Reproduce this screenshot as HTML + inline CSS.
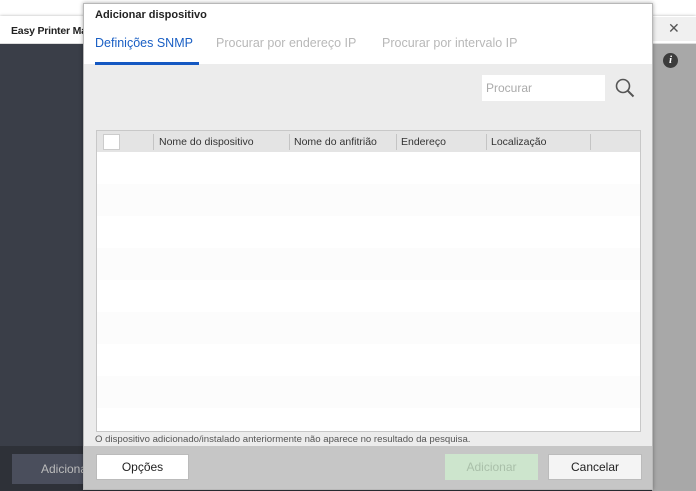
<!DOCTYPE html>
<html><head><meta charset="utf-8"><style>
*{margin:0;padding:0;box-sizing:border-box}
body{width:696px;height:491px;overflow:hidden;background:#fff;font-family:"Liberation Sans","DejaVu Sans",sans-serif;position:relative}
.abs{position:absolute}
</style></head><body>
<div class="abs" style="left:0;top:16px;width:696px;height:475px;background:#3a3e48;box-shadow:0 0 3px rgba(0,0,0,.3)"></div>
<div class="abs" style="left:0;top:16px;width:696px;height:28px;background:#fff;border-bottom:1px solid #ddd"></div>
<div class="abs" style="left:652px;top:17px;width:44px;height:24px;background:#f0f0f0"></div>
<div class="abs" style="left:11px;top:25px;font-size:10.5px;font-weight:bold;color:#222;letter-spacing:-0.2px">Easy Printer Manager</div>
<div class="abs" style="left:668px;top:20px;font-size:14px;font-weight:bold;color:#555">✕</div>
<div class="abs" style="left:652px;top:44px;width:44px;height:447px;background:#a8a8a8"></div>
<div class="abs" style="left:663px;top:53px;width:15px;height:15px;border-radius:50%;background:#3c3c3c;color:#fff;font-size:11px;font-style:italic;font-weight:bold;text-align:center;line-height:15px;font-family:'Liberation Serif',serif">i</div>
<div class="abs" style="left:0;top:446px;width:652px;height:45px;background:#2e3138"></div>
<div class="abs" style="left:12px;top:454px;width:80px;height:30px;background:#4a4e5c;color:#bbb;font-size:12px;line-height:30px;padding-left:29px">Adicionar</div>
<div class="abs" style="left:83px;top:3px;width:570px;height:487px;background:#ececec;border:1px solid #b8b8b8;box-shadow:0 0 4px rgba(0,0,0,.35)">
  <div class="abs" style="left:0;top:0;width:568px;height:60px;background:#fff"></div>
  <div class="abs" style="left:11px;top:5px;font-size:11px;font-weight:bold;color:#222">Adicionar dispositivo</div>
  <div class="abs" style="left:11px;top:32px;font-size:12.5px;color:#1a5fc4">Definições SNMP</div>
  <div class="abs" style="left:11px;top:58px;width:104px;height:3px;background:#1458c2"></div>
  <div class="abs" style="left:132px;top:32px;font-size:12.5px;color:#b8b8b8">Procurar por endereço IP</div>
  <div class="abs" style="left:298px;top:32px;font-size:12.5px;color:#b8b8b8">Procurar por intervalo IP</div>
  <div class="abs" style="left:398px;top:71px;width:123px;height:26px;background:#fff;font-size:12px;color:#aaa;line-height:26px;padding-left:4px">Procurar</div>
  <svg class="abs" style="left:530px;top:73px" width="22" height="22" viewBox="0 0 22 22"><circle cx="9" cy="9" r="6.5" fill="none" stroke="#555" stroke-width="1.6"/><line x1="13.8" y1="13.8" x2="19.5" y2="19.5" stroke="#555" stroke-width="2"/></svg>
  <div class="abs" style="left:12px;top:126px;width:545px;height:302px;background:#fff;border:1px solid #c8c8c8;overflow:hidden">
    <div class="abs" style="left:0;top:0;width:545px;height:21px;background:#e4e4e4;font-size:10.5px;color:#333;line-height:21px">
      <div class="abs" style="left:6px;top:3px;width:17px;height:16px;background:#fff;border:1px solid #ccc"></div>
      <div class="abs" style="left:56px;top:3px;width:1px;height:16px;background:#c4c4c4"></div>
      <div class="abs" style="left:62px;top:1px">Nome do dispositivo</div>
      <div class="abs" style="left:192px;top:3px;width:1px;height:16px;background:#c4c4c4"></div>
      <div class="abs" style="left:197px;top:1px">Nome do anfitrião</div>
      <div class="abs" style="left:299px;top:3px;width:1px;height:16px;background:#c4c4c4"></div>
      <div class="abs" style="left:304px;top:1px">Endereço</div>
      <div class="abs" style="left:389px;top:3px;width:1px;height:16px;background:#c4c4c4"></div>
      <div class="abs" style="left:394px;top:1px">Localização</div>
      <div class="abs" style="left:493px;top:3px;width:1px;height:16px;background:#c4c4c4"></div>
    </div>
    <div class="abs" style="left:0;top:53px;width:545px;height:32px;background:#fcfcfc"></div>
    <div class="abs" style="left:0;top:117px;width:545px;height:32px;background:#fcfcfc"></div>
    <div class="abs" style="left:0;top:181px;width:545px;height:32px;background:#fcfcfc"></div>
    <div class="abs" style="left:0;top:245px;width:545px;height:32px;background:#fcfcfc"></div>
  </div>
  <div class="abs" style="left:11px;top:430px;font-size:9.6px;color:#555">O dispositivo adicionado/instalado anteriormente não aparece no resultado da pesquisa.</div>
  <div class="abs" style="left:0;top:442px;width:568px;height:43px;background:#c6c6c6"></div>
  <div class="abs" style="left:12px;top:450px;width:93px;height:26px;background:#fff;border:1px solid #bbb;font-size:12px;color:#222;text-align:center;line-height:24px">Opções</div>
  <div class="abs" style="left:361px;top:450px;width:93px;height:26px;background:#cde5cd;font-size:12px;color:#a9bfa9;text-align:center;line-height:26px">Adicionar</div>
  <div class="abs" style="left:464px;top:450px;width:94px;height:26px;background:#f4f4f4;border:1px solid #bbb;font-size:12px;color:#222;text-align:center;line-height:24px">Cancelar</div>
</div>
</body></html>
